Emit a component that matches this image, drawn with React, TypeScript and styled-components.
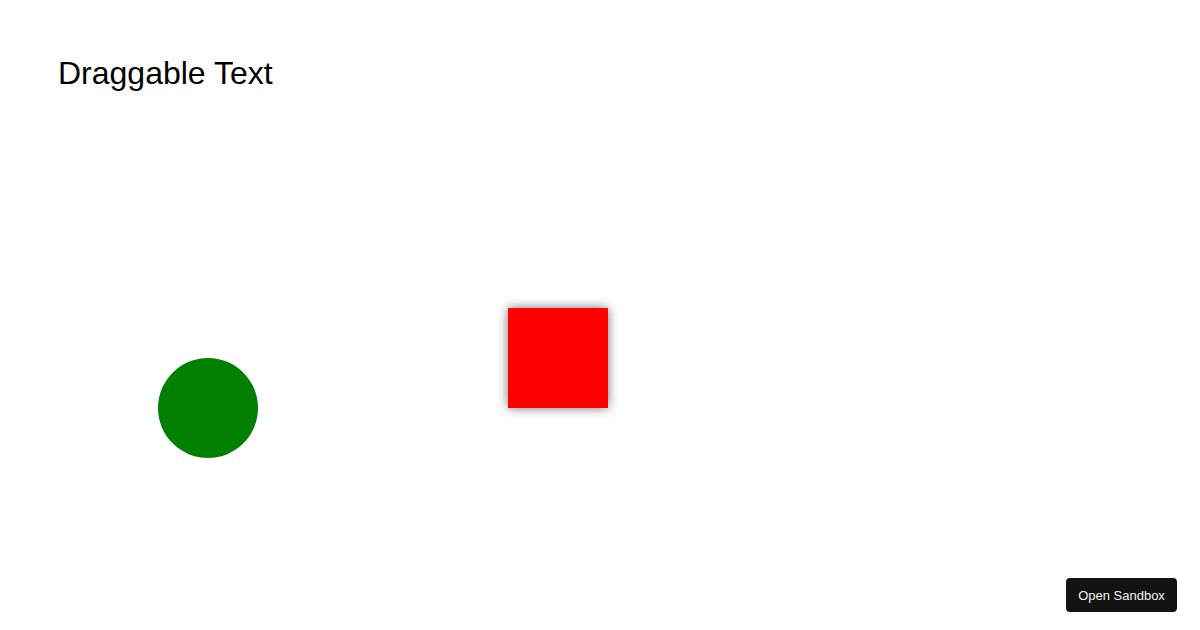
import React from 'react'
import styled, { createGlobalStyle } from 'styled-components'

const GlobalStyle = createGlobalStyle`
  html, body {
    margin: 0;
    padding: 0;
    background: #ffffff;
    font-family: "Liberation Sans", Arial, sans-serif;
  }
`

const Canvas = styled.div`
  position: relative;
  width: 1200px;
  height: 630px;
  overflow: hidden;
  background: #ffffff;
`

const Item = styled.div<{ $x: number; $y: number }>`
  position: absolute;
  left: ${p => p.$x}px;
  top: ${p => p.$y}px;
  cursor: grab;
  user-select: none;
`

const Title = styled(Item)`
  font-size: 32px;
  line-height: 1;
  color: #000000;
  white-space: nowrap;
`

const Square = styled(Item)`
  width: 100px;
  height: 100px;
  background: #ff0000;
  box-shadow: 0 0 10px rgba(0, 0, 0, 0.55);
`

const Circle = styled(Item)`
  width: 100px;
  height: 100px;
  border-radius: 50%;
  background: #008000;
`

const SandboxButton = styled.button`
  position: absolute;
  right: 23px;
  bottom: 18px;
  width: 111px;
  height: 34px;
  padding: 0;
  border: none;
  border-radius: 4px;
  background: #131313;
  color: #f2f2f2;
  font-family: "Liberation Sans", Arial, sans-serif;
  font-size: 13px;
  cursor: pointer;
`

export default function App() {
  return (
    <>
      <GlobalStyle />
      <Canvas>
        <Title $x={58} $y={57}>Draggable Text</Title>
        <Square $x={508} $y={308} />
        <Circle $x={158} $y={358} />
        <SandboxButton>Open Sandbox</SandboxButton>
      </Canvas>
    </>
  )
}
